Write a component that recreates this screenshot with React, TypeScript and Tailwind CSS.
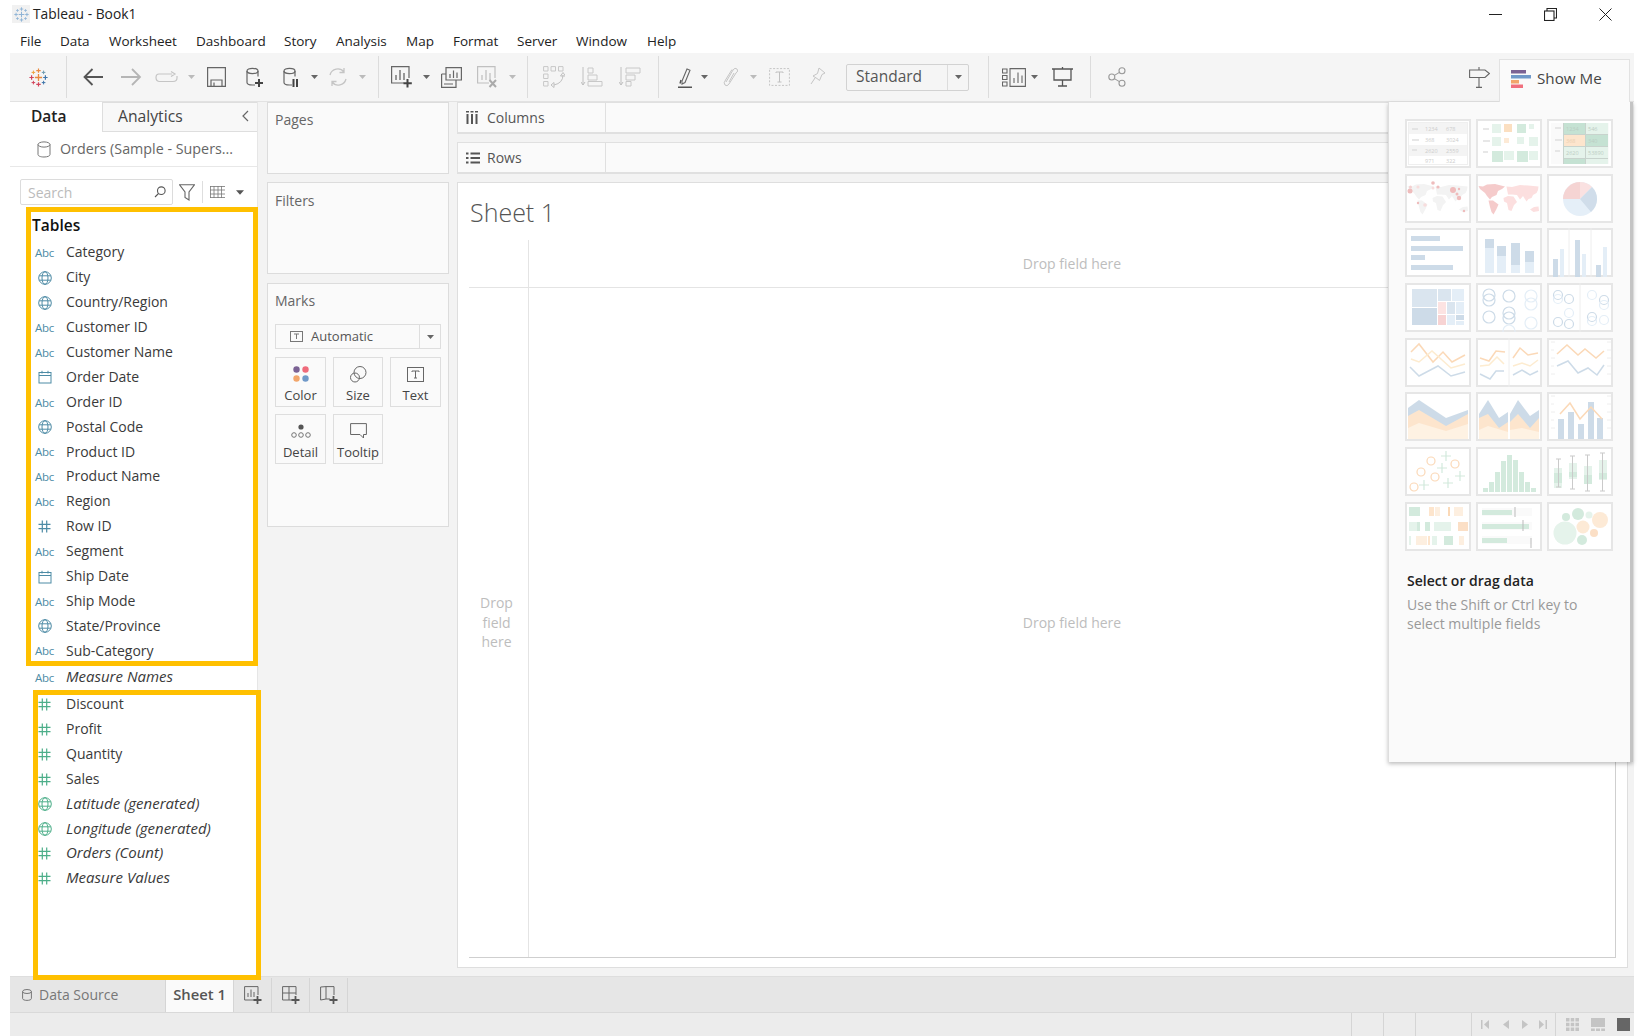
import React from 'react';

const menuItems = [
  ['File', 'w-[40px]'], ['Data', 'w-[49px]'], ['Worksheet', 'w-[87px]'], ['Dashboard', 'w-[88px]'], ['Story', 'w-[52px]'],
  ['Analysis', 'w-[70px]'], ['Map', 'w-[47px]'], ['Format', 'w-[64px]'], ['Server', 'w-[59px]'], ['Window', 'w-[71px]'], ['Help', 'w-[50px]'],
];

type FieldKind = 'abc' | 'globe' | 'cal' | 'hash' | 'mhash' | 'mglobe';

const dimensions: [string, FieldKind][] = [
  ['Category', 'abc'], ['City', 'globe'], ['Country/Region', 'globe'], ['Customer ID', 'abc'], ['Customer Name', 'abc'],
  ['Order Date', 'cal'], ['Order ID', 'abc'], ['Postal Code', 'globe'], ['Product ID', 'abc'], ['Product Name', 'abc'],
  ['Region', 'abc'], ['Row ID', 'hash'], ['Segment', 'abc'], ['Ship Date', 'cal'], ['Ship Mode', 'abc'],
  ['State/Province', 'globe'], ['Sub-Category', 'abc'],
];

const measures: [string, FieldKind, boolean][] = [
  ['Discount', 'mhash', false], ['Profit', 'mhash', false], ['Quantity', 'mhash', false], ['Sales', 'mhash', false],
  ['Latitude (generated)', 'mglobe', true], ['Longitude (generated)', 'mglobe', true], ['Orders (Count)', 'mhash', true], ['Measure Values', 'mhash', true],
];

const Plus = ({ x, y, s, c, w = 1.6 }: { x: number; y: number; s: number; c: string; w?: number }) => (
  <path d={`M${x - s} ${y}H${x + s}M${x} ${y - s}V${y + s}`} stroke={c} strokeWidth={w} fill="none" />
);

function Logo({ pale, className }: { pale?: boolean; className?: string }) {
  const c = (v: string) => (pale ? '#8fb4d6' : v);
  return (
    <svg viewBox="0 0 19 19" className={className}>
      <Plus x={9.5} y={9.5} s={3.6} c={c('#ea8a3f')} w={1.3} />
      <Plus x={2.6} y={9.5} s={2.2} c={c('#d2455a')} w={1.2} />
      <Plus x={16.4} y={9.5} s={2.2} c={c('#3f75ab')} w={1.2} />
      <Plus x={9.5} y={2.6} s={2.2} c={c('#ea8a3f')} w={1.2} />
      <Plus x={9.5} y={16.4} s={2.2} c={c('#d2455a')} w={1.2} />
      <Plus x={4.4} y={4.4} s={1.8} c={c('#f0a13c')} w={1} />
      <Plus x={14.6} y={4.4} s={1.8} c={c('#6f9bb0')} w={1} />
      <Plus x={4.4} y={14.6} s={1.8} c={c('#d2455a')} w={1} />
      <Plus x={14.6} y={14.6} s={1.8} c={c('#3f75ab')} w={1} />
    </svg>
  );
}

function Caret({ className = '', color = '#666' }: { className?: string; color?: string }) {
  return (
    <svg viewBox="0 0 7 4" className={`w-[7px] h-[4px] shrink-0 ${className}`}>
      <path d="M0 0H7L3.5 4Z" fill={color} />
    </svg>
  );
}

const Sep = ({ className }: { className: string }) => <div className={`w-px h-[42px] bg-[#dcdcdc] shrink-0 ${className}`} />;

function Cyl({ c = '#666' }: { c?: string }) {
  return (
    <g fill="none" stroke={c} strokeWidth="1.2">
      <ellipse cx="6.5" cy="4" rx="5.5" ry="2.6" />
      <path d="M1 4V15.5C1 17 3 18 6.5 18H9M12 4V9.5" />
    </g>
  );
}

function FieldIcon({ kind }: { kind: FieldKind }) {
  if (kind === 'abc') return <span className="translate-y-[1px] text-[11.5px] leading-none font-medium text-[#4d8ba5] tracking-[-0.3px]">Abc</span>;
  const color = kind === 'mhash' || kind === 'mglobe' ? '#4cae89' : '#4d8ba5';
  if (kind === 'globe' || kind === 'mglobe') {
    return (
      <svg viewBox="0 0 14 14" className="w-[14px] h-[14px] translate-y-[1px]" fill="none" stroke={color} strokeWidth="1">
        <circle cx="7" cy="7" r="6.3" />
        <ellipse cx="7" cy="7" rx="3" ry="6.3" />
        <path d="M1.2 4.8H12.8M1.2 9.2H12.8" />
      </svg>
    );
  }
  if (kind === 'cal') {
    return (
      <svg viewBox="0 0 14 14" className="w-[14px] h-[14px] translate-y-[1px]" fill="none" stroke={color} strokeWidth="1">
        <rect x="1" y="2.5" width="12" height="10.5" />
        <path d="M1 5.5H13M4 .8V3.5M10 .8V3.5" />
      </svg>
    );
  }
  return (
    <svg viewBox="0 0 13 13" className="w-[13px] h-[13px] translate-y-[1px]" fill="none" stroke={color} strokeWidth="1.2">
      <path d="M4.3 .5V12.5M8.7 .5V12.5M.5 4.3H12.5M.5 8.7H12.5" />
    </svg>
  );
}

function FieldRow({ name, kind, italic }: { name: string; kind: FieldKind; italic?: boolean }) {
  return (
    <div className="flex items-center h-[24.9px] shrink-0">
      <div className="w-[23px] flex justify-center shrink-0">
        <FieldIcon kind={kind} />
      </div>
      <span className={`ml-[10px] text-[#3a3a3a] whitespace-nowrap ${italic ? 'italic text-[15px]' : 'text-[14px]'}`}>{name}</span>
    </div>
  );
}

function MarkButton({ label, children, className = 'w-[51px]' }: { label: string; children: React.ReactNode; className?: string }) {
  return (
    <div className={`h-[50px] border border-[#dedede] bg-[#fafafa] flex flex-col items-center pt-[4px] ${className}`}>
      <div className="h-[24px] flex items-center justify-center">{children}</div>
      <span className="text-[13px] leading-[18px] text-[#444]">{label}</span>
    </div>
  );
}

function Card({ title, className }: { title: string; className: string }) {
  return (
    <div className={`border border-[#dcdcdc] bg-[#fafafa] px-[7px] ${className}`}>
      <div className="text-[14px] text-[#666] leading-[20px]">{title}</div>
    </div>
  );
}

// Show Me thumbnails, all in a 66x49 box
const G = ['#cfe8da', '#e3f2e9', '#bfdfcf'];
const BL = '#c8d8e6';
const BP = '#e2edf7';

const americas = 'M2.5 12L7 12.5L11 10.5L19 10L29 12.5L26 15L22 17L20.5 21L16 23L14 25.5L11 22L9 19L4 15ZM12.5 26.5L17 26.5L22.5 30.5L20.5 35L17.5 40.5L15.5 38L14 33Z';
const oldWorld = 'M30.5 12.5L36 13L44 11L52 11.5L62.5 12.5L62 16L60.5 19L57 21L55.5 24L52.5 25L50.5 27.5L47 22L44 25.5L41 21L36 20.5L32 20.5ZM27.5 24L32 22L37.5 22.5L41 28L38 31L35.5 37L32.5 36L31 29L28 27.5ZM54 35.5L58 33L62.5 32.5L63 37L57.5 38Z';

const Lines = ({ d, c, w = 1.5 }: { d: string; c: string; w?: number }) => <path d={d} fill="none" stroke={c} strokeWidth={w} />;

const ring = (cx: number, cy: number, r: number, c: string) => <circle key={`${cx}-${cy}`} cx={cx} cy={cy} r={r} fill="none" stroke={c} strokeWidth="1.2" />;

const thumbs: React.ReactNode[] = [
  <g key="text">
    <rect x="3.5" y="3.5" width="59" height="42" fill="none" stroke="#eee" />
    <rect x="4" y="4" width="58" height="11" fill="#f3f3f3" />
    <rect x="4" y="26" width="58" height="11" fill="#f3f3f3" />
    <path d="M7 10H13M7 21H14M7 31H12" stroke="#ddd" strokeWidth="1.5" />
    <g fontSize="5.5" fill="#c8c8c8" fontFamily="Open Sans">
      <text x="20" y="12">1234</text><text x="41" y="12">678</text>
      <text x="20" y="23">368</text><text x="41" y="23">3024</text>
      <text x="20" y="34">2620</text><text x="41" y="34">2559</text>
      <text x="20" y="44">971</text><text x="41" y="44">322</text>
    </g>
  </g>,
  <g key="heat">
    <path d="M7 10H13M7 22H14M7 33H12" stroke="#ddd" strokeWidth="1.5" />
    <rect x="16" y="5" width="9" height="9" fill={G[1]} /><rect x="28" y="5" width="8" height="8" fill="#fbdcbb" /><rect x="41" y="5" width="9" height="9" fill={G[0]} /><rect x="53" y="5" width="5" height="5" fill={G[1]} />
    <rect x="16" y="18" width="9" height="9" fill={G[1]} /><rect x="28" y="19" width="5" height="5" fill="#fde8d2" /><rect x="41" y="18" width="7" height="7" fill={G[1]} /><rect x="53" y="18" width="9" height="9" fill={G[1]} />
    <rect x="16" y="32" width="11" height="11" fill={G[0]} /><rect x="28" y="32" width="10" height="9" fill={G[1]} /><rect x="41" y="32" width="11" height="11" fill={G[0]} /><rect x="53" y="32" width="9" height="9" fill={G[1]} />
  </g>,
  <g key="hl">
    <rect x="4" y="4" width="58" height="41" fill="#fafafa" />
    <path d="M8 9H14M8 21H15M8 32H13" stroke="#ddd" strokeWidth="1.5" />
    <rect x="17" y="4" width="21" height="11" fill={G[2]} /><rect x="39" y="4" width="22" height="11" fill={G[1]} />
    <rect x="17" y="16" width="21" height="11" fill="#fde3c8" /><rect x="39" y="16" width="22" height="11" fill={G[2]} />
    <rect x="17" y="28" width="21" height="11" fill={G[1]} /><rect x="39" y="28" width="22" height="11" fill={G[1]} />
    <rect x="17" y="40" width="21" height="5" fill={G[2]} /><rect x="39" y="40" width="22" height="5" fill={G[1]} />
    <path d="M16.5 4V45M38.5 4V45M17 15.5H61M17 27.5H61M17 39.5H61" stroke="#c3cfc8" strokeWidth="1" />
    <g fontSize="5.5" fill="#b5c9bd" fontFamily="Open Sans">
      <text x="19" y="12">1234</text><text x="41" y="12">546</text>
      <text x="19" y="24" fill="#e8c9a8">368</text><text x="41" y="24">340</text>
      <text x="19" y="36">2620</text><text x="41" y="36">53890</text>
    </g>
  </g>,
  <g key="sym">
    <path d={americas} fill="#f2f2f2" />
    <path d={oldWorld} fill="#f2f2f2" />
    <g fill="#eeb5b5">
      <circle cx="5" cy="17" r="2.5" /><circle cx="5.5" cy="13" r="1.5" fill="#f3cccc" /><circle cx="13" cy="13" r="1.6" fill="#f8dada" />
      <circle cx="28" cy="9" r="1.8" /><circle cx="33" cy="13" r="1.6" /><circle cx="28" cy="14" r="1.5" fill="#f8dada" />
      <circle cx="48" cy="16" r="3" /><circle cx="54" cy="15" r="1.2" /><circle cx="52" cy="20" r="1.5" /><circle cx="54" cy="24" r="2.2" />
      <circle cx="13" cy="29" r="1.2" /><circle cx="20" cy="31" r="1.8" fill="#f8dada" /><circle cx="59" cy="37" r="1.2" />
    </g>
  </g>,
  <g key="filled">
    <path d={oldWorld} fill="#fcdcdc" />
    <path d={americas} fill="#f5c6c6" />
  </g>,
  <g key="pie">
    <circle cx="33" cy="25" r="17" fill="#e3eef8" />
    <path d="M33 25V8A17 17 0 0 0 16 25Z" fill="#f5d0cf" />
    <path d="M33 25V8A17 17 0 0 1 45 13Z" fill="#fadede" />
    <path d="M33 25L45 13A17 17 0 0 1 44 38Z" fill="#cbdae8" />
  </g>,
  <g key="hbar" fill={BL}>
    <rect x="6" y="8" width="29" height="5" /><rect x="6" y="18" width="52" height="5" /><rect x="6" y="27" width="14" height="5" /><rect x="6" y="37" width="42" height="5" />
  </g>,
  <g key="stack">
    <rect x="9" y="11" width="9" height="34" fill={BP} /><rect x="9" y="11" width="9" height="9" fill={BL} />
    <rect x="21" y="18" width="9" height="27" fill={BP} /><rect x="21" y="18" width="9" height="10" fill={BL} />
    <rect x="35" y="15" width="9" height="30" fill={BP} /><rect x="35" y="15" width="9" height="22" fill={BL} />
    <rect x="49" y="23" width="9" height="22" fill={BP} /><rect x="49" y="23" width="9" height="11" fill={BL} />
  </g>,
  <g key="side">
    <path d="M22 0V49M44 0V49" stroke="#eee" />
    <rect x="6" y="31" width="5" height="18" fill={BL} /><rect x="13" y="21" width="4" height="28" fill={BP} />
    <rect x="28" y="12" width="5" height="37" fill={BL} /><rect x="35" y="26" width="4" height="23" fill={BP} />
    <rect x="49" y="37" width="5" height="12" fill={BL} /><rect x="56" y="19" width="4" height="30" fill={BP} />
  </g>,
  <g key="tree">
    <rect x="7" y="6" width="25" height="18" fill="#d6e3ee" /><rect x="7" y="25" width="25" height="17" fill={BL} />
    <rect x="33" y="6" width="13" height="12" fill="#d6e3ee" /><rect x="47" y="6" width="12" height="12" fill={BP} />
    <rect x="33" y="19" width="8" height="12" fill="#fce0df" /><rect x="42" y="19" width="8" height="12" fill="#d6e3ee" /><rect x="51" y="19" width="8" height="12" fill={BP} />
    <rect x="33" y="32" width="8" height="10" fill="#f7cfcf" /><rect x="42" y="32" width="8" height="10" fill={BP} /><rect x="51" y="32" width="8" height="5" fill={BL} /><rect x="51" y="38" width="8" height="4" fill={BP} />
  </g>,
  <g key="circ">
    {ring(13, 12, 6, BL)}{ring(13, 17, 6, BL)}{ring(33, 13, 6, BL)}{ring(55, 13, 6, BP)}{ring(55, 21, 6, BP)}
    {ring(13, 34, 6, BL)}{ring(33, 30, 6, BL)}{ring(33, 35, 6, BL)}{ring(55, 40, 6, BP)}{ring(33, 48, 6, BP)}
  </g>,
  <g key="circ2">
    <path d="M33 0V49" stroke="#eee" />
    {ring(11, 12, 4.5, BL)}{ring(11, 16, 4.5, BP)}{ring(22, 16, 4.5, BL)}{ring(22, 30, 4.5, BP)}{ring(11, 39, 4.5, BL)}{ring(22, 41, 4.5, BL)}
    {ring(45, 12, 4.5, BP)}{ring(57, 17, 4.5, BL)}{ring(57, 22, 4.5, BP)}{ring(45, 34, 4.5, BL)}{ring(45, 38, 4.5, BP)}{ring(57, 37, 4.5, BP)}
  </g>,
  <g key="line">
    <Lines d="M6 14L14 6L28 24L38 14L47 24L60 17" c="#fbd5b0" />
    <Lines d="M6 21L14 24L27 13L46 30L60 26" c="#fdeacb" />
    <Lines d="M5 29L14 38L33 28L46 38L60 34" c={BL} />
  </g>,
  <g key="line2">
    <path d="M33 0V49" stroke="#eee" />
    <Lines d="M4 20L13 23L20 13L29 14" c="#fbd5b0" />
    <Lines d="M4 28L13 27L21 19L28 26" c="#fdeacb" />
    <Lines d="M4 36L14 41L20 33L28 33" c={BL} />
    <Lines d="M37 20L44 10L52 17L62 15" c="#fbd5b0" />
    <Lines d="M37 28L46 25L54 28L62 22" c="#fdeacb" />
    <Lines d="M37 37L46 32L54 37L62 33" c={BL} />
  </g>,
  <g key="line3">
    <path d="M4 4H8M4 12H7M4 20H8M4 28H7M4 36H8M60 4H64M60 12H64M60 20H64M60 28H64M60 36H64" stroke="#eee" />
    <Lines d="M10 16L20 7L31 17L38 11L49 20L57 13" c="#fbd5b0" />
    <Lines d="M10 28L21 23L31 35L41 30L50 37L57 27" c={BL} />
  </g>,
  <g key="area">
    <path d="M3 16L14 8L41 26L63 18V47H3Z" fill={BL} />
    <path d="M3 24L14 18L41 34L63 22V47H3Z" fill="#fde3c8" />
    <path d="M3 36L14 31L41 39L63 32V47H3Z" fill="#fef1e1" />
  </g>,
  <g key="area2">
    <path d="M3 22L12 8L23 26L32 20V47H3Z" fill={BL} /><path d="M34 22L42 8L54 24L63 18V47H34Z" fill={BL} />
    <path d="M3 26L12 22L23 36L32 30V47H3Z" fill="#fde3c8" /><path d="M34 30L42 22L54 36L63 26V47H34Z" fill="#fde3c8" />
    <path d="M3 38L12 34L32 40V47H3Z" fill="#fef1e1" /><path d="M34 38L46 36L63 40V47H34Z" fill="#fef1e1" />
  </g>,
  <g key="combo">
    <path d="M4 4H8M4 12H7M4 20H8M4 28H7M4 36H8M60 4H64M60 12H64M60 20H64M60 28H64M60 36H64" stroke="#eee" />
    <g fill={BL}>
      <rect x="11" y="27" width="6" height="20" /><rect x="21" y="20" width="6" height="27" /><rect x="31" y="32" width="6" height="15" /><rect x="41" y="10" width="6" height="37" /><rect x="50" y="26" width="6" height="21" />
    </g>
    <Lines d="M13 22L23 11L33 27L44 15L55 27" c="#fbd5b0" />
  </g>,
  <g key="scatter">
    <g fill="none" stroke="#fbd5b0" strokeWidth="1.2">
      <circle cx="9" cy="40" r="4" /><circle cx="16" cy="25" r="4" /><circle cx="26" cy="14" r="4" /><circle cx="30" cy="30" r="4" /><circle cx="50" cy="17" r="4" />
    </g>
    <Plus x={41} y={9} s={5} c={G[0]} w={1.2} />
    <Plus x={37} y={21} s={5} c={G[0]} w={1.2} />
    <Plus x={19} y={38} s={5} c={G[0]} w={1.2} />
    <Plus x={43} y={36} s={5} c={G[0]} w={1.2} />
    <Plus x={55} y={29} s={5} c={G[0]} w={1.2} />
  </g>,
  <g key="hist" fill={G[0]}>
    <rect x="7" y="41" width="5" height="4" /><rect x="13" y="35" width="5" height="10" /><rect x="19" y="25" width="5" height="20" /><rect x="25" y="14" width="5" height="31" />
    <rect x="31" y="8" width="5" height="37" /><rect x="37" y="13" width="5" height="32" /><rect x="43" y="25" width="5" height="20" /><rect x="49" y="35" width="5" height="10" /><rect x="55" y="41" width="5" height="4" />
  </g>,
  <g key="box">
    <rect x="7" y="21" width="8" height="20" fill={G[1]} /><rect x="7" y="26" width="8" height="10" fill={G[0]} />
    <rect x="22" y="16" width="8" height="16" fill={G[1]} /><rect x="22" y="25" width="8" height="5" fill={G[0]} />
    <rect x="37" y="19" width="8" height="18" fill={G[1]} /><rect x="37" y="28" width="8" height="9" fill={G[0]} />
    <rect x="52" y="13" width="8" height="20" fill={G[1]} /><rect x="52" y="26" width="8" height="6" fill={G[0]} />
    <path d="M9 12H14M11.5 12V40M9 40H14M23 9H28M25.5 9V42M23 42H28M38 8H43M40.5 8V44M38 44H43M53 6H58M55.5 6V44M53 44H58" stroke="#c5c5c5" strokeWidth="1" fill="none" />
  </g>,
  <g key="gantt">
    <rect x="4" y="5" width="11" height="9" fill={G[0]} /><rect x="24" y="5" width="5" height="9" fill="#fde3c8" /><rect x="30" y="5" width="5" height="9" fill="#fdeedd" /><rect x="43" y="5" width="2" height="9" fill="#fbd5b0" /><rect x="49" y="5" width="9" height="9" fill="#fdeedd" />
    <rect x="4" y="20" width="8" height="9" fill={G[1]} /><rect x="12" y="20" width="3" height="9" fill={G[0]} /><rect x="20" y="20" width="5" height="9" fill={G[0]} /><rect x="29" y="20" width="17" height="9" fill={G[1]} /><rect x="53" y="20" width="10" height="9" fill="#fbdcc0" />
    <rect x="4" y="34" width="2" height="9" fill={G[1]} /><rect x="11" y="34" width="11" height="9" fill="#fdeedd" /><rect x="23" y="34" width="2" height="9" fill="#fde3c8" /><rect x="27" y="34" width="5" height="9" fill={G[1]} /><rect x="39" y="34" width="9" height="9" fill={G[0]} /><rect x="54" y="34" width="5" height="9" fill="#fdeedd" />
  </g>,
  <g key="bullet">
    <rect x="6" y="6" width="50" height="8" fill="#fafafa" /><rect x="6" y="20" width="50" height="8" fill="#fafafa" /><rect x="6" y="34" width="50" height="8" fill="#fafafa" />
    <rect x="6" y="8" width="30" height="5" fill={G[0]} /><rect x="6" y="22" width="47" height="5" fill={G[0]} /><rect x="6" y="36" width="25" height="5" fill={G[0]} />
    <path d="M39 5V15M47 18V29M55 36V46" stroke="#b5b5b5" strokeWidth="1" />
  </g>,
  <g key="bubble">
    <circle cx="18" cy="31" r="11.5" fill={G[1]} /><circle cx="19" cy="15" r="4" fill={G[0]} /><circle cx="31" cy="12" r="6" fill={G[0]} /><circle cx="42" cy="13" r="3.5" fill={G[1]} />
    <circle cx="36" cy="25" r="6.5" fill="#fde8d2" /><circle cx="53" cy="18" r="8" fill="#fde8d2" /><circle cx="47" cy="31" r="4" fill="#fbdcc0" /><circle cx="35" cy="38" r="5" fill={G[0]} />
  </g>,
];

const Ic = ({ className, view, children }: { className: string; view: string; children: React.ReactNode }) => (
  <svg viewBox={view} className={`shrink-0 ${className}`} fill="none">{children}</svg>
);

export default function App() {
  return (
    <div className="w-[1641px] h-[1036px] flex flex-col bg-white overflow-hidden font-['Open_Sans',sans-serif] text-[#333]">
      {/* Title bar */}
      <div className="h-[28px] flex items-center shrink-0 pl-[12px] pr-[29px]">
        <div className="w-[18px] h-[18px] bg-[#f1f1f1] flex items-center justify-center">
          <Logo pale className="w-[15px] h-[15px]" />
        </div>
        <span className="ml-[3px] text-[13.8px] text-[#222]">Tableau - Book1</span>
        <div className="ml-auto flex items-center gap-[42px]">
          <svg viewBox="0 0 13 13" className="w-[13px] h-[13px]"><path d="M0 6.5H13" stroke="#222" strokeWidth="1" /></svg>
          <svg viewBox="0 0 13 13" className="w-[13px] h-[13px]" fill="none" stroke="#222" strokeWidth="1.1"><rect x=".5" y="3" width="9.5" height="9.5" /><path d="M3 3V.5H12.5V10H10" /></svg>
          <svg viewBox="0 0 13 13" className="w-[13px] h-[13px]" fill="none" stroke="#222" strokeWidth="1"><path d="M.5 .5L12.5 12.5M12.5 .5L.5 12.5" /></svg>
        </div>
      </div>

      {/* Menu bar */}
      <div className="h-[25px] flex items-center shrink-0 pl-[20px] pt-[2px] text-[13.5px] text-[#222]">
        {menuItems.map(([label, w]) => (
          <span key={label} className={w}>{label}</span>
        ))}
      </div>

      <div className="flex-1 flex flex-col ml-[10px] mr-[7px] min-h-0">
        {/* Toolbar */}
        <div className="h-[49px] shrink-0 flex items-center bg-[#f5f5f5] border-b border-[#e2e2e2]">
          <Logo className="w-[19px] h-[19px] ml-[19px] shrink-0" />
          <Sep className="ml-[18px]" />
          <Ic className="w-[20px] h-[18px] ml-[16px]" view="0 0 20 18"><path d="M20 9H1.5M9.5 1L1.5 9L9.5 17" stroke="#555" strokeWidth="1.8" /></Ic>
          <Ic className="w-[21px] h-[18px] ml-[18px]" view="0 0 21 18"><path d="M0 9H19M11 1L19 9L11 17" stroke="#b5b5b5" strokeWidth="1.8" /></Ic>
          <Ic className="w-[23px] h-[12px] ml-[13px]" view="0 0 23 12"><path d="M17 3H4Q1 3 1 6.5T4 10.5H18Q22 10.5 22 7V5M16 .5L20 3L16 5.5" stroke="#c5c5c5" strokeWidth="1.2" /></Ic>
          <Caret className="ml-[10px]" color="#bbb" />
          <Ic className="w-[19px] h-[20px] ml-[12px]" view="0 0 19 20"><path d="M.6 .6H18.4V19.4H.6ZM4 19.4V13H15V19.4M7 15.5V19.4" stroke="#666" strokeWidth="1.2" /></Ic>
          <Ic className="w-[18px] h-[21px] ml-[20px]" view="0 0 18 21"><Cyl /><path d="M13 12V20M9 16H17" stroke="#444" strokeWidth="2" /></Ic>
          <Ic className="w-[16px] h-[21px] ml-[19px]" view="0 0 16 21"><Cyl /><path d="M10.5 12V20M14 12V20" stroke="#444" strokeWidth="2" /></Ic>
          <Caret className="ml-[12px]" />
          <Ic className="w-[20px] h-[20px] ml-[10px]" view="0 0 20 20"><path d="M2 8A8 8 0 0 1 16 5M18 12A8 8 0 0 1 4 15M16 1V5.5H11.5M4 19V14.5H8.5" stroke="#c5c5c5" strokeWidth="1.3" /></Ic>
          <Caret className="ml-[11px]" color="#bbb" />
          <Sep className="ml-[12px]" />
          <Ic className="w-[21px] h-[22px] ml-[12px]" view="0 0 21 22"><path d="M13 17H.6V.6H18V12" stroke="#666" strokeWidth="1.2" /><path d="M5 14V9M9 14V4M13 14V7" stroke="#666" strokeWidth="1.3" /><path d="M16.5 13V21.5M12.5 17.3H20.8" stroke="#444" strokeWidth="2" /></Ic>
          <Caret className="ml-[11px]" />
          <Ic className="w-[21px] h-[21px] ml-[11px]" view="0 0 21 21"><path d="M5 13V.6H20.4V13H5ZM.6 7H5M.6 7V20.4H15V13" stroke="#666" strokeWidth="1.2" /><path d="M9 11V7M12.5 11V3.5M16 11V5.5M3 17H12" stroke="#666" strokeWidth="1.2" /></Ic>
          <Ic className="w-[20px] h-[22px] ml-[15px]" view="0 0 20 22"><path d="M12 17H.6V.6H18V12" stroke="#c0c0c0" strokeWidth="1.2" /><path d="M5 14V9M9 14V4M13 14V7" stroke="#c0c0c0" strokeWidth="1.3" /><path d="M12.5 14L19 21M19 14L12.5 21" stroke="#aaa" strokeWidth="2" /></Ic>
          <Caret className="ml-[12px]" color="#bbb" />
          <Sep className="ml-[11px]" />
          <Ic className="w-[22px] h-[22px] ml-[15px]" view="0 0 22 22"><path d="M.6 .6H5V5H.6ZM8 .6H12.5V5H8ZM15.5 .6H20V5H15.5ZM.6 8H5V12.5H.6ZM.6 15.5H5V20H.6Z" stroke="#c8c8c8" /><path d="M20 9Q20 17 11 19M8 19L11 16.5V21.5ZM20 6.5L17.5 10H22.5Z" stroke="#c0c0c0" /></Ic>
          <Ic className="w-[22px] h-[20px] ml-[16px]" view="0 0 22 20"><path d="M2 0V18M0 15L2 18L4 15" stroke="#c0c0c0" /><path d="M7 1H12V6H7ZM7 8H16V13H7ZM7 14.5H21V19H7Z" stroke="#c8c8c8" /></Ic>
          <Ic className="w-[22px] h-[20px] ml-[16px]" view="0 0 22 20"><path d="M2 0V18M0 15L2 18L4 15" stroke="#c0c0c0" /><path d="M7 1H21V6H7ZM7 8H16V13H7ZM7 14.5H12V19H7Z" stroke="#c8c8c8" /></Ic>
          <Sep className="ml-[17px]" />
          <Ic className="w-[15px] h-[21px] ml-[19px]" view="0 0 15 21"><path d="M4 14L9 2L12 3.2L7 15.5L4 17Z" stroke="#666" strokeWidth="1.1" /><path d="M2 16.5L3 13M0 20.3H14" stroke="#555" strokeWidth="1.4" /></Ic>
          <Caret className="ml-[8px]" />
          <Ic className="w-[15px] h-[20px] ml-[15px]" view="0 0 15 20"><path d="M3 15L10 3Q12 0 14 2T13 6L6 17Q4 20 2 18T2.5 13L9 2.5M6 15L11 6" stroke="#c5c5c5" strokeWidth="1" /></Ic>
          <Caret className="ml-[12px]" color="#bbb" />
          <Ic className="w-[21px] h-[18px] ml-[12px]" view="0 0 21 18"><rect x=".6" y=".6" width="19.8" height="16.8" stroke="#c5c5c5" strokeDasharray="2 1.5" /><path d="M7 5V4H14V5M10.5 4V14M8.5 14H12.5" stroke="#c0c0c0" /></Ic>
          <Ic className="w-[16px] h-[20px] ml-[20px]" view="0 0 16 20"><path d="M9 1L15 6L12 7.5L9.5 13.5L7 11.5L3 9L7.5 6.5ZM5 11L1 17" stroke="#c5c5c5" /></Ic>
          <div className="ml-[20px] w-[123px] h-[27px] shrink-0 border border-[#d2d2d2] rounded-[2px] flex items-center bg-[#f5f5f5]">
            <span className="flex-1 pl-[9px] text-[15.5px] text-[#555]">Standard</span>
            <div className="w-[21px] h-full border-l border-[#dcdcdc] flex items-center justify-center"><Caret /></div>
          </div>
          <Sep className="ml-[19px]" />
          <Ic className="w-[24px] h-[19px] ml-[13px]" view="0 0 24 19"><path d="M.5 1H5V5H.5ZM.5 7.5H5V11.5H.5ZM.5 14H5V18H.5ZM8 .6H23.4V18.4H8ZM12 15V10M16 15V4.5M20 15V7.5" stroke="#666" strokeWidth="1.1" /></Ic>
          <Caret className="ml-[5px]" />
          <Ic className="w-[21px] h-[20px] ml-[14px]" view="0 0 21 20"><path d="M0 2H21M2 2.5V13H19V2.5M10.5 0V2M10.5 13V18.5M6 19H15" stroke="#555" strokeWidth="1.3" /></Ic>
          <Sep className="ml-[17px]" />
          <Ic className="w-[18px] h-[20px] ml-[17px]" view="0 0 18 20"><circle cx="3.8" cy="10" r="3" stroke="#999" strokeWidth="1.1" /><circle cx="14" cy="3.8" r="3" stroke="#999" strokeWidth="1.1" /><circle cx="14" cy="16.2" r="3" stroke="#999" strokeWidth="1.1" /><path d="M6.4 8.4L11.4 5.4M6.4 11.6L11.4 14.6" stroke="#999" strokeWidth="1.1" /></Ic>
          <Ic className="w-[21px] h-[22px] ml-auto" view="0 0 21 22"><path d="M.6 4H16L20.4 7.5L16 11.5H.6ZM10 1V4M10 11.5V21M7 21.4H13" stroke="#666" strokeWidth="1.1" /></Ic>
          <div className="ml-[9px] mr-[4px] w-[131px] h-[43px] pb-[5px] self-end -mb-px shrink-0 relative z-20 bg-[#fafafa] border-t border-l border-r border-[#e2e2e2] flex items-center">
            <svg viewBox="0 0 20 18" className="ml-[11px] w-[20px] h-[18px]">
              <rect x="0" y="0" width="15" height="3.5" fill="#7b6294" />
              <rect x="0" y="5" width="20" height="3.5" fill="#7099c9" />
              <rect x="0" y="10" width="8" height="3.5" fill="#f2a66b" />
              <rect x="0" y="14.5" width="12" height="3.5" fill="#f0707e" />
            </svg>
            <span className="ml-[6px] text-[15.2px] text-[#444]">Show Me</span>
          </div>
        </div>

        {/* Main area */}
        <div className="flex-1 flex relative bg-[#f3f3f3] min-h-0">
          {/* Data pane */}
          <div className="w-[248px] shrink-0 bg-white flex flex-col border-r border-[#e6e6e6]">
            <div className="h-[30px] shrink-0 flex">
              <div className="w-[92px] flex items-center pl-[21px] text-[15.5px] font-semibold text-[#222] bg-white">Data</div>
              <div className="flex-1 flex items-center bg-[#f8f8f8] border-l border-b border-t border-[#dedede] pl-[15px] text-[15.7px] text-[#444]">
                Analytics
                <svg viewBox="0 0 7 12" className="w-[7px] h-[12px] ml-auto mr-[8px] -translate-y-px" fill="none" stroke="#666" strokeWidth="1.2"><path d="M6 1L1 6L6 11" /></svg>
              </div>
            </div>
            <div className="h-[35px] shrink-0 flex items-center border-b border-[#e8e8e8] pl-[27px]">
              <svg viewBox="0 0 14 17" className="w-[14px] h-[17px]" fill="none" stroke="#777" strokeWidth="1"><ellipse cx="7" cy="3.5" rx="6" ry="2.6" /><path d="M1 3.5V13.5C1 15 3.5 16 7 16S13 15 13 13.5V3.5" /></svg>
              <span className="ml-[9px] text-[14.3px] text-[#666] whitespace-nowrap">Orders (Sample - Supers...</span>
            </div>
            <div className="mt-[12px] h-[26px] shrink-0 flex items-center pl-[10px]">
              <div className="w-[153px] h-[26px] border border-[#dcdcdc] rounded-[2px] flex items-center pl-[7px] pr-[6px] text-[14px] text-[#bbb]">
                Search
                <svg viewBox="0 0 12 12" className="ml-auto w-[12px] h-[12px]" fill="none" stroke="#555" strokeWidth="1.1"><circle cx="7.3" cy="4.7" r="3.8" /><path d="M4.5 7.5L1 11" /></svg>
              </div>
              <svg viewBox="0 0 16 17" className="ml-[6px] w-[16px] h-[17px]" fill="none" stroke="#666" strokeWidth="1.1"><path d="M.6 .8H15.4L10 8V16L6 13.5V8Z" /></svg>
              <div className="ml-[7px] w-px h-[22px] bg-[#dedede]" />
              <svg viewBox="0 0 15 12" className="ml-[7px] w-[15px] h-[12px]" stroke="#777" strokeWidth=".8"><path d="M0 .5H15M0 4H15M0 8H15M0 11.5H15M.5 0V12M4 0V12M8 0V12M11.5 0V12" /></svg>
              <Caret className="ml-[11px] w-[8px] h-[5px]" color="#555" />
            </div>

            {/* highlighted dimensions */}
            <div className="relative z-10 mt-[2px] ml-[16px] w-[232px] h-[459px] shrink-0 border-[5px] border-[#ffc000]">
              <div className="h-[27.5px] pl-px flex items-center text-[15.5px] font-semibold text-[#111]">Tables</div>
              <div className="pl-[2px]">
                {dimensions.map(([name, kind]) => (
                  <FieldRow key={name} name={name} kind={kind} />
                ))}
              </div>
            </div>
            <div className="-mt-[2px] pl-[23px] shrink-0">
              <FieldRow name="Measure Names" kind="abc" italic />
            </div>

            {/* highlighted measures */}
            <div className="relative z-10 mt-px ml-[23px] w-[228px] h-[290px] shrink-0 border-[5px] border-[#ffc000] bg-white">
              <div className="-ml-[5px] -mt-[4px]">
                {measures.map(([name, kind, italic]) => (
                  <FieldRow key={name} name={name} kind={kind} italic={italic} />
                ))}
              </div>
            </div>
          </div>

          {/* Pages / Filters / Marks */}
          <div className="w-[182px] ml-[9px] shrink-0 flex flex-col">
            <Card title="Pages" className="h-[72px] pt-[7px]" />
            <Card title="Filters" className="h-[92px] mt-[8px] pt-[8px]" />
            <div className="h-[244px] mt-[9px] border border-[#dcdcdc] bg-[#fafafa] px-[7px] pt-[7px]">
              <div className="text-[14px] text-[#666] leading-[20px]">Marks</div>
              <div className="mt-[13px] h-[25px] border border-[#dedede] flex items-center">
                <div className="flex-1 flex items-center pl-[14px]">
                  <svg viewBox="0 0 13 11" className="w-[13px] h-[11px]" fill="none" stroke="#777"><rect x=".5" y=".5" width="12" height="10" /><path d="M4 3H9M6.5 3V8" /></svg>
                  <span className="ml-[8px] text-[13px] text-[#555]">Automatic</span>
                </div>
                <div className="w-[21px] h-full border-l border-[#dedede] flex items-center justify-center"><Caret /></div>
              </div>
              <div className="mt-[8px] grid grid-cols-[51px_50px_51px] gap-x-[7px] gap-y-[7px]">
                <MarkButton label="Color">
                  <svg viewBox="0 0 16 16" className="w-[16px] h-[16px]">
                    <circle cx="3.5" cy="3.5" r="3.2" fill="#7b6294" /><circle cx="12.5" cy="3.5" r="3.2" fill="#ef6b7b" />
                    <circle cx="3.5" cy="12.5" r="3.2" fill="#f2a66b" /><circle cx="12.5" cy="12.5" r="3.2" fill="#7099c9" />
                  </svg>
                </MarkButton>
                <MarkButton label="Size" className="w-[50px]">
                  <svg viewBox="0 0 17 17" className="w-[17px] h-[17px]" fill="none" stroke="#666"><circle cx="10" cy="6.5" r="6" /><circle cx="5" cy="11.5" r="4.5" /></svg>
                </MarkButton>
                <MarkButton label="Text">
                  <svg viewBox="0 0 17 15" className="w-[17px] h-[15px]" fill="none" stroke="#666"><rect x=".5" y=".5" width="16" height="14" /><path d="M5 5V4H12V5M8.5 4V11M7 11H10" /></svg>
                </MarkButton>
                <MarkButton label="Detail">
                  <svg viewBox="0 0 20 14" className="w-[20px] h-[14px]" fill="none" stroke="#666" strokeWidth=".9">
                    <circle cx="10" cy="3" r="2.6" fill="#555" stroke="none" /><circle cx="3" cy="11" r="2.3" /><circle cx="10" cy="11" r="2.3" /><circle cx="17" cy="11" r="2.3" />
                  </svg>
                </MarkButton>
                <MarkButton label="Tooltip" className="w-[50px]">
                  <svg viewBox="0 0 17 16" className="w-[17px] h-[16px]" fill="none" stroke="#666"><path d="M.6 .6H16.4V11.5H13.5V15L10 11.5H.6Z" /></svg>
                </MarkButton>
              </div>
            </div>
          </div>

          {/* Shelves and canvas */}
          <div className="flex-1 ml-[8px] mr-[6px] min-w-0 flex flex-col">
            <div className="h-[32px] shrink-0 flex bg-[#fafafa] border-t border-x border-b-2 border-[#e0e0e0]">
              <div className="w-[148px] flex items-center pl-[8px] border-r border-[#e0e0e0]">
                <svg viewBox="0 0 12 13" className="w-[12px] h-[13px]" stroke="#555" strokeWidth="2"><path d="M1.5 3V13M6 3V13M10.5 3V13" /><path d="M0 .8H3M4.5 .8H7.5M9 .8H12" strokeWidth="1.4" /></svg>
                <span className="ml-[9px] text-[14px] text-[#555]">Columns</span>
              </div>
            </div>
            <div className="h-[32px] mt-[8px] shrink-0 flex bg-[#fafafa] border-t border-x border-b-2 border-[#e0e0e0]">
              <div className="w-[148px] flex items-center pl-[8px] border-r border-[#e0e0e0]">
                <svg viewBox="0 0 14 12" className="w-[14px] h-[12px]" stroke="#555" strokeWidth="1.8"><path d="M0 1.5H2.5M4.5 1.5H14M0 6H2.5M4.5 6H14M0 10.5H2.5M4.5 10.5H14" /></svg>
                <span className="ml-[7px] text-[14px] text-[#555]">Rows</span>
              </div>
            </div>
            <div className="mt-[8px] h-[786px] shrink-0 bg-white border border-[#dedede] flex flex-col pl-[11px] pr-[11px] pb-[9px]">
              <div className="h-[57px] shrink-0 pl-px pt-[11px] text-[25px] leading-[36px] font-light text-[#555]">Sheet 1</div>
              <div className="flex-1 grid grid-cols-[60px_1fr] grid-rows-[48px_1fr] border-r border-b border-[#cfcfcf] text-[14px] text-[#bdbdbd]">
                <div className="border-r border-b border-[#e4e4e4]" />
                <div className="border-b border-[#e4e4e4] flex items-center justify-center">Drop field here</div>
                <div className="border-r border-[#e4e4e4] pr-[4px] flex items-center justify-center text-center leading-[19.5px]">Drop<br />field<br />here</div>
                <div className="flex items-center justify-center">Drop field here</div>
              </div>
            </div>
          </div>

          {/* Show Me panel */}
          <div className="absolute z-10 left-[1378px] top-0 w-[245px] h-[660px] bg-[#fafafa] border-l border-[#dedede] border-r-[3px] border-r-[#c4c4c4] shadow-[0_2px_4px_rgba(0,0,0,0.25)] pl-[16px] pt-[17px]">
            <div className="grid grid-cols-[66px_66px_66px] gap-x-[5px] gap-y-[5.7px]">
              {thumbs.map((t, i) => (
                <div key={i} className="h-[49px] bg-white outline-2 -outline-offset-2 outline-[#e6e6e6]">
                  <svg viewBox="0 0 66 49" className="w-[66px] h-[49px] opacity-90">{t}</svg>
                </div>
              ))}
            </div>
            <div className="mt-[20px] pl-[2px] text-[14px] leading-[20px] font-semibold text-[#222]">Select or drag data</div>
            <div className="mt-[4px] pl-[2px] text-[14px] leading-[19px] text-[#999]">Use the Shift or Ctrl key to<br />select multiple fields</div>
          </div>
        </div>

        {/* Sheet tabs */}
        <div className="h-[36px] shrink-0 flex items-end bg-[#e6e6e6] border-t border-[#dedede]">
          <div className="w-[155px] h-[32px] pb-[3px] flex items-center pl-[12px] text-[14px] text-[#777]">
            <svg viewBox="0 0 10 12" className="w-[10px] h-[12px]" fill="none" stroke="#777"><ellipse cx="5" cy="2.5" rx="4.4" ry="2" /><path d="M.6 2.5V9.5C.6 10.6 2.5 11.4 5 11.4S9.4 10.6 9.4 9.5V2.5" /></svg>
            <span className="ml-[7px]">Data Source</span>
          </div>
          <div className="w-[69px] h-[32px] pb-[4px] bg-[#fafafa] border-x border-[#d5d5d5] flex items-center justify-center text-[14.8px] font-semibold text-[#555]">Sheet 1</div>
          <div className="w-[38px] h-[34px] border-r border-[#d5d5d5] flex items-center justify-center">
            <svg viewBox="0 0 18 18" className="w-[18px] h-[18px]" fill="none"><path d="M10 14H.6V.6H14V9" stroke="#666" /><path d="M4 11V7M7 11V3.5M10 11V6" stroke="#666" /><path d="M13.5 10V18M9.5 14H17.5" stroke="#555" strokeWidth="1.8" /></svg>
          </div>
          <div className="w-[38px] h-[34px] border-r border-[#d5d5d5] flex items-center justify-center">
            <svg viewBox="0 0 18 18" className="w-[18px] h-[18px]" fill="none"><path d="M10 14H.6V.6H14V9M.6 7H14M7 .6V14" stroke="#666" /><path d="M13.5 10V18M9.5 14H17.5" stroke="#555" strokeWidth="1.8" /></svg>
          </div>
          <div className="w-[38px] h-[34px] border-r border-[#d5d5d5] flex items-center justify-center">
            <svg viewBox="0 0 18 18" className="w-[18px] h-[18px]" fill="none"><path d="M10 13H6L.6 14V1L6 .6H14V9M6 .6V13" stroke="#666" /><path d="M13.5 10V18M9.5 14H17.5" stroke="#555" strokeWidth="1.8" /></svg>
          </div>
        </div>

        {/* Status bar */}
        <div className="h-[24px] shrink-0 flex bg-[#ececec] border-t border-[#d9d9d9]">
          <div className="flex-1" />
          <div className="w-[32px] border-l border-[#d5d5d5]" />
          <div className="w-[32px] border-l border-[#d5d5d5]" />
          <div className="w-[56px] border-l border-[#d5d5d5]" />
          <div className="w-[84px] border-l border-[#d5d5d5] flex items-center pl-[9px]">
            <svg viewBox="0 0 8 9" className="w-[8px] h-[9px]" fill="#c4c4c4"><path d="M0 0H1.5V9H0ZM8 0V9L3 4.5Z" /></svg>
            <svg viewBox="0 0 6 9" className="ml-[14px] w-[6px] h-[9px]" fill="#c4c4c4"><path d="M6 0V9L0 4.5Z" /></svg>
            <svg viewBox="0 0 6 9" className="ml-[13px] w-[6px] h-[9px]" fill="#c4c4c4"><path d="M0 0V9L6 4.5Z" /></svg>
            <svg viewBox="0 0 8 9" className="ml-[11px] w-[8px] h-[9px]" fill="#c4c4c4"><path d="M0 0V9L5 4.5ZM6.5 0H8V9H6.5Z" /></svg>
          </div>
          <div className="w-[79px] border-l border-[#d5d5d5] flex items-center pl-[10px] gap-[12px]">
            <svg viewBox="0 0 13 13" className="w-[13px] h-[13px]" fill="#c4c4c4"><path d="M0 0H3.5V3.5H0ZM4.7 0H8.2V3.5H4.7ZM9.4 0H13V3.5H9.4ZM0 4.7H3.5V8.2H0ZM4.7 4.7H8.2V8.2H4.7ZM9.4 4.7H13V8.2H9.4ZM0 9.4H3.5V13H0ZM4.7 9.4H8.2V13H4.7ZM9.4 9.4H13V13H9.4Z" /></svg>
            <svg viewBox="0 0 14 13" className="w-[14px] h-[13px]" fill="#c4c4c4"><path d="M0 0H14V9H0ZM0 10.5H3.8V13H0ZM5 10.5H9V13H5ZM10.2 10.5H14V13H10.2Z" /></svg>
            <div className="w-[13px] h-[13px] bg-[#666]" />
          </div>
        </div>
      </div>
    </div>
  );
}
